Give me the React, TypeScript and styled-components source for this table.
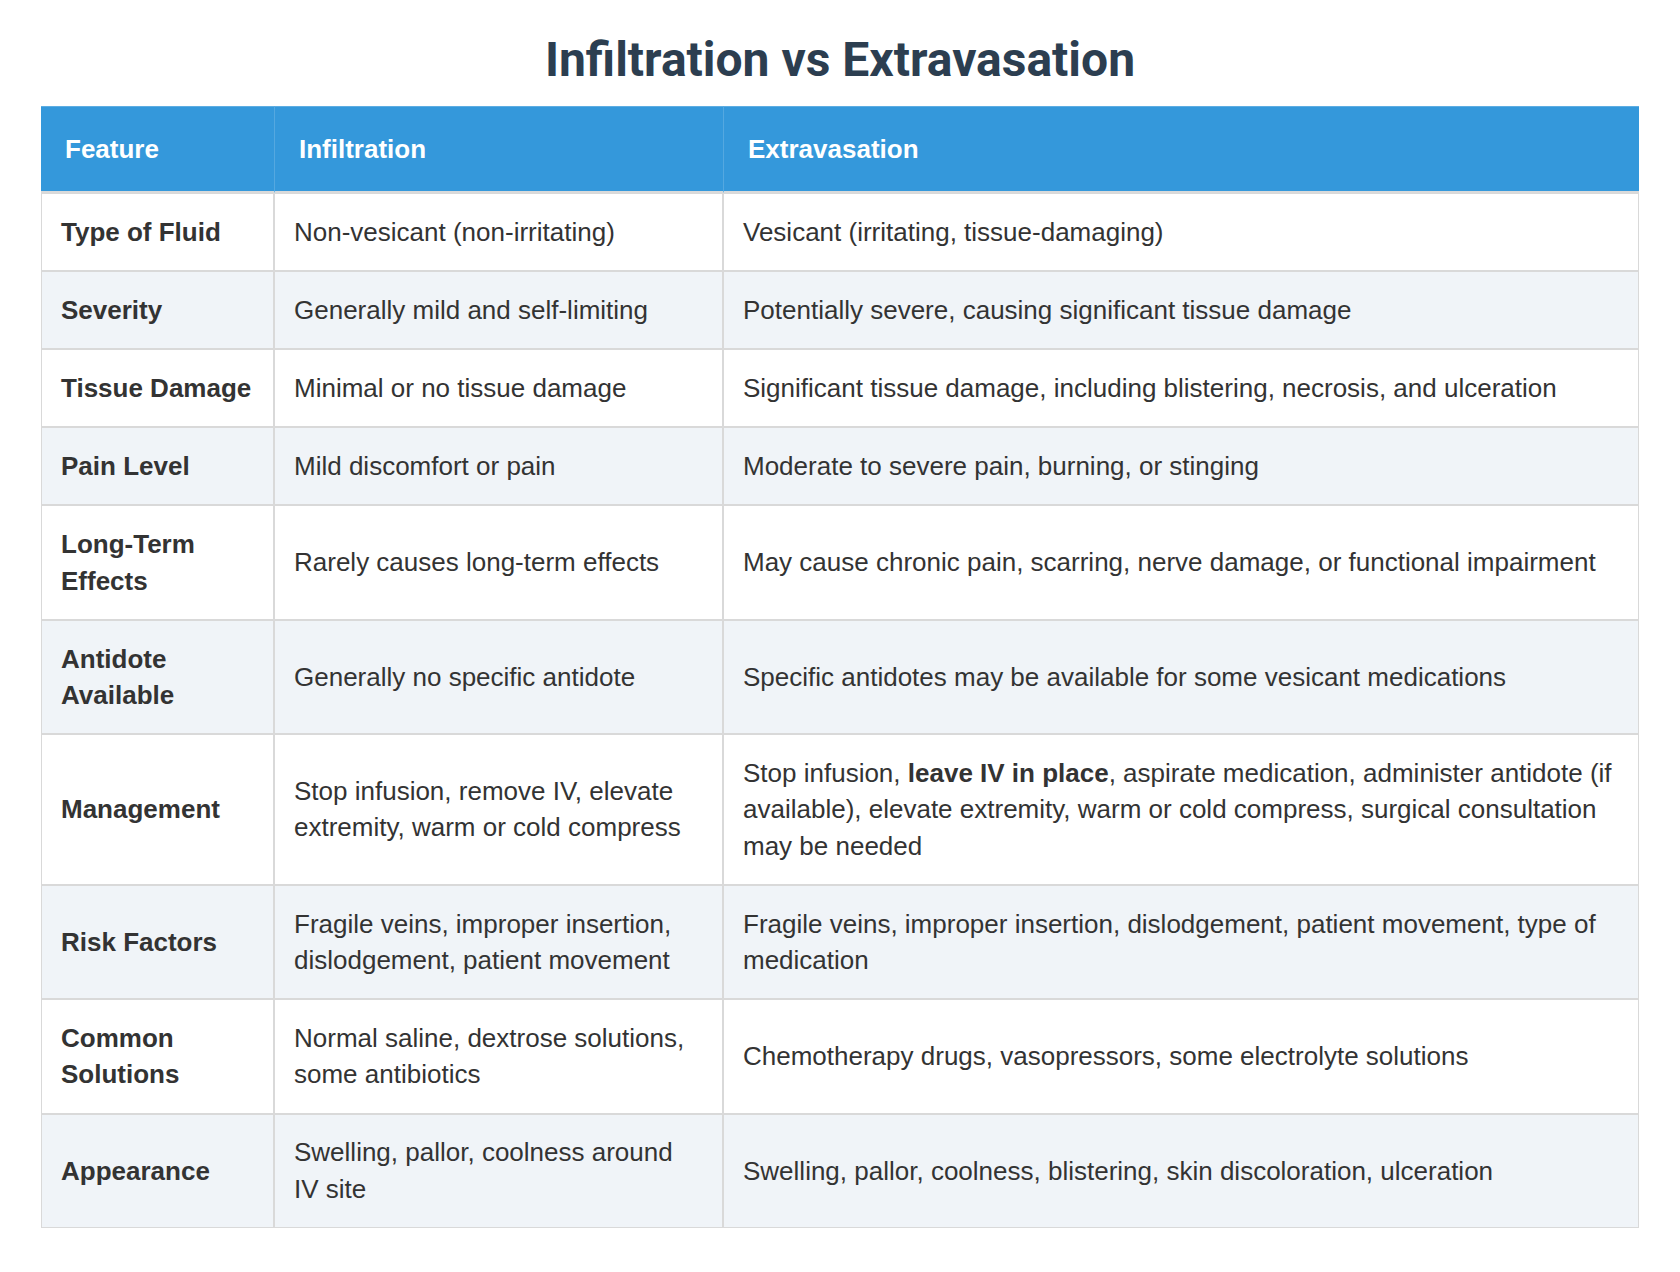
import React from 'react';
import styled, { createGlobalStyle } from 'styled-components';

const GlobalStyle = createGlobalStyle`
  body {
    margin: 0;
    background: #ffffff;
    font-family: 'Liberation Sans', Arial, sans-serif;
    color: #333333;
  }
`;

const Page = styled.div`
  padding: 31px 41px 40px;
`;

const Title = styled.h1`
  margin: 0 0 18px;
  text-align: center;
  font-family: Roboto, 'Liberation Sans', sans-serif;
  font-weight: 700;
  font-size: 48px;
  line-height: normal;
  color: #2c3e50;
`;

const Table = styled.table`
  width: 100%;
  border-collapse: separate;
  border-spacing: 0;
  table-layout: fixed;
  font-size: 26px;
  line-height: 1.4;
`;

const HeaderCell = styled.th<{ $width?: number }>`
  box-sizing: border-box;
  width: ${(p) => (p.$width ? `${p.$width}px` : 'auto')};
  background: #3498db;
  color: #ffffff;
  font-weight: 700;
  text-align: left;
  padding: 24px 24px 24px;
  border-top: 1px solid #5dade2;
  border-bottom: 2px solid #dadada;
  & + & {
    border-left: 1px solid #54a8e0;
  }
`;

const Row = styled.tr<{ $striped: boolean }>`
  background: ${(p) => (p.$striped ? '#f0f4f8' : '#ffffff')};
`;

const Cell = styled.td<{ $feature?: boolean }>`
  border: 1.6px solid #d9d9d9;
  padding: 19.8px 19px;
  vertical-align: middle;
  font-weight: ${(p) => (p.$feature ? 700 : 400)};
  color: #333333;
`;

type Entry = {
  feature: string;
  infiltration: React.ReactNode;
  extravasation: React.ReactNode;
};

const rows: Entry[] = [
  {
    feature: 'Type of Fluid',
    infiltration: 'Non-vesicant (non-irritating)',
    extravasation: 'Vesicant (irritating, tissue-damaging)',
  },
  {
    feature: 'Severity',
    infiltration: 'Generally mild and self-limiting',
    extravasation: 'Potentially severe, causing significant tissue damage',
  },
  {
    feature: 'Tissue Damage',
    infiltration: 'Minimal or no tissue damage',
    extravasation: 'Significant tissue damage, including blistering, necrosis, and ulceration',
  },
  {
    feature: 'Pain Level',
    infiltration: 'Mild discomfort or pain',
    extravasation: 'Moderate to severe pain, burning, or stinging',
  },
  {
    feature: 'Long-Term Effects',
    infiltration: 'Rarely causes long-term effects',
    extravasation: 'May cause chronic pain, scarring, nerve damage, or functional impairment',
  },
  {
    feature: 'Antidote Available',
    infiltration: 'Generally no specific antidote',
    extravasation: 'Specific antidotes may be available for some vesicant medications',
  },
  {
    feature: 'Management',
    infiltration: 'Stop infusion, remove IV, elevate extremity, warm or cold compress',
    extravasation: (
      <>
        Stop infusion, <strong>leave IV in place</strong>, aspirate medication, administer antidote (if
        available), elevate extremity, warm or cold compress, surgical consultation may be needed
      </>
    ),
  },
  {
    feature: 'Risk Factors',
    infiltration: 'Fragile veins, improper insertion, dislodgement, patient movement',
    extravasation: 'Fragile veins, improper insertion, dislodgement, patient movement, type of medication',
  },
  {
    feature: 'Common Solutions',
    infiltration: 'Normal saline, dextrose solutions, some antibiotics',
    extravasation: 'Chemotherapy drugs, vasopressors, some electrolyte solutions',
  },
  {
    feature: 'Appearance',
    infiltration: 'Swelling, pallor, coolness around IV site',
    extravasation: 'Swelling, pallor, coolness, blistering, skin discoloration, ulceration',
  },
];

const App: React.FC = () => {
  return (
    <Page>
      <GlobalStyle />
      <Title>Infiltration vs Extravasation</Title>
      <Table>
        <thead>
          <tr>
            <HeaderCell $width={233}>Feature</HeaderCell>
            <HeaderCell $width={449}>Infiltration</HeaderCell>
            <HeaderCell>Extravasation</HeaderCell>
          </tr>
        </thead>
        <tbody>
          {rows.map((r, i) => (
            <Row key={r.feature} $striped={i % 2 === 1}>
              <Cell $feature>{r.feature}</Cell>
              <Cell>{r.infiltration}</Cell>
              <Cell>{r.extravasation}</Cell>
            </Row>
          ))}
        </tbody>
      </Table>
    </Page>
  );
};

export default App;
